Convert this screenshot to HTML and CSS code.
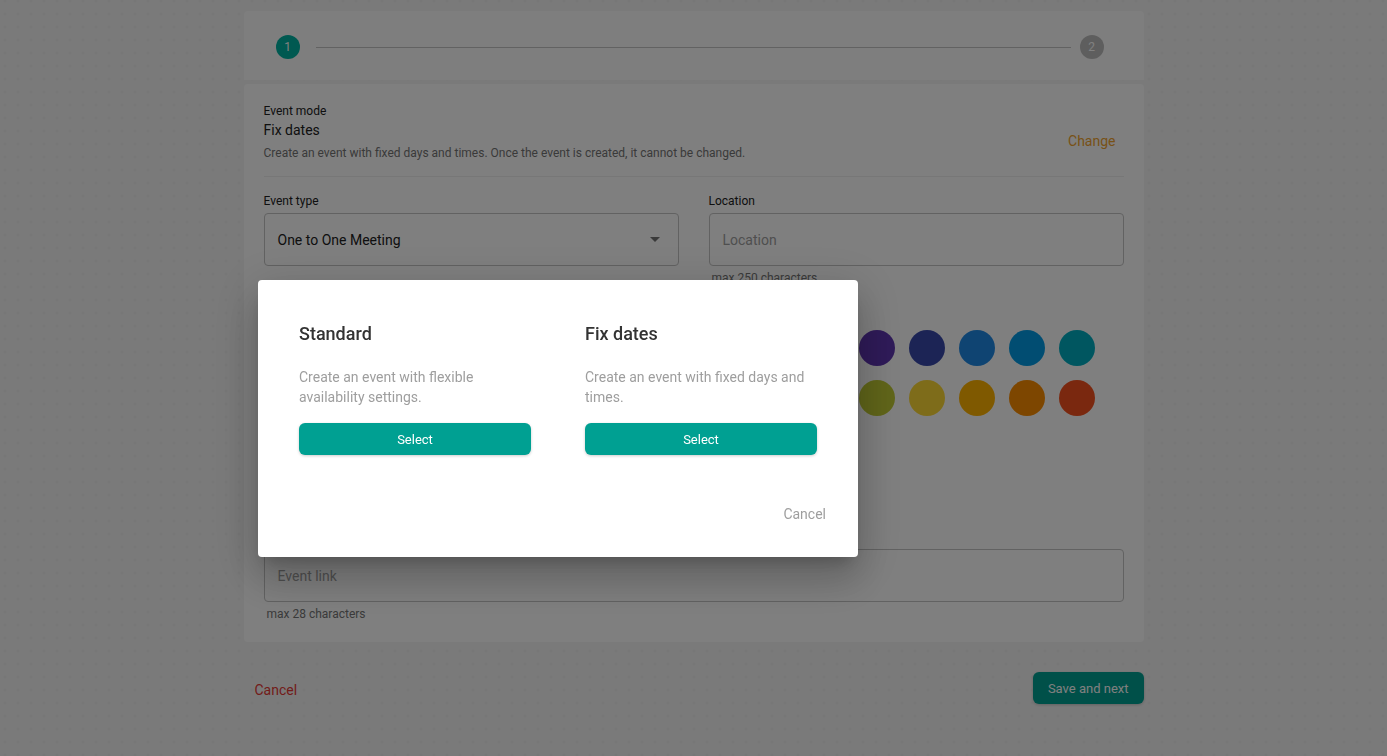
FILE: index.html
```html
<!DOCTYPE html>
<html lang="en">
<head>
<meta charset="utf-8">
<title>New event</title>
<link rel="stylesheet" href="styles.css">
</head>
<body>
<div class="page">
  <div class="stepper">
    <span class="step step-active">1</span>
    <span class="step-line"></span>
    <span class="step">2</span>
  </div>

  <div class="card">
    <div class="mode">
      <div class="mode-info">
        <div class="label">Event mode</div>
        <div class="mode-value">Fix dates</div>
        <div class="mode-desc">Create an event with fixed days and times. Once the event is created, it cannot be changed.</div>
      </div>
      <button class="link-btn change-btn">Change</button>
    </div>
    <div class="divider"></div>

    <div class="grid">
      <div class="field">
        <div class="label">Event type</div>
        <div class="box select-box">
          <span class="value">One to One Meeting</span>
          <span class="caret"></span>
        </div>
      </div>
      <div class="field">
        <div class="label">Location</div>
        <div class="box"><span class="placeholder">Location</span></div>
        <div class="hint">max 250 characters</div>
      </div>

      <div class="field"></div>
      <div class="field">
        <div class="label">Color</div>
        <div class="swatches">
          <span class="swatch" style="background:#e53935"></span>
          <span class="swatch" style="background:#d81b60"></span>
          <span class="swatch" style="background:#8e24aa"></span>
          <span class="swatch" style="background:#5e35b1"></span>
          <span class="swatch" style="background:#3949ab"></span>
          <span class="swatch" style="background:#1e88e5"></span>
          <span class="swatch" style="background:#039be5"></span>
          <span class="swatch" style="background:#00acc1"></span>
          <span class="swatch" style="background:#00897b"></span>
          <span class="swatch" style="background:#43a047"></span>
          <span class="swatch" style="background:#7cb342"></span>
          <span class="swatch" style="background:#c0ca33"></span>
          <span class="swatch" style="background:#fdd835"></span>
          <span class="swatch" style="background:#ffb300"></span>
          <span class="swatch" style="background:#fb8c00"></span>
          <span class="swatch" style="background:#f4511e"></span>
        </div>
      </div>
    </div>

    <div class="field link-field">
      <div class="label">Event link</div>
      <div class="box"><span class="placeholder">Event link</span></div>
      <div class="hint">max 28 characters</div>
    </div>
  </div>

  <div class="actions">
    <button class="link-btn cancel-btn">Cancel</button>
    <button class="primary-btn save-btn">Save and next</button>
  </div>
</div>

<div class="backdrop"></div>

<div class="dialog">
  <div class="options">
    <div class="option">
      <h2 class="option-title">Standard</h2>
      <p class="option-desc">Create an event with flexible availability settings.</p>
      <button class="primary-btn select-btn">Select</button>
    </div>
    <div class="option">
      <h2 class="option-title">Fix dates</h2>
      <p class="option-desc">Create an event with fixed days and times.</p>
      <button class="primary-btn select-btn">Select</button>
    </div>
  </div>
  <div class="dialog-actions">
    <button class="link-btn dialog-cancel">Cancel</button>
  </div>
</div>
</body>
</html>
```

FILE: styles.css
```css
* {
  box-sizing: border-box;
}

html, body {
  margin: 0;
  height: 100%;
}

body {
  font-family: Roboto, "Liberation Sans", Arial, sans-serif;
  color: #212121;
  background-color: #f5f5f5;
  background-image: radial-gradient(circle, #eaeaea 0.8px, transparent 1.4px);
  background-size: 13px 13px;
  background-position: -1.5px 7.5px;
  overflow: hidden;
}

button {
  font-family: inherit;
  border: 0;
  background: none;
  cursor: pointer;
  padding: 0;
}

.page {
  width: 900px;
  margin: 0 auto;
  padding-top: 11px;
}

/* Stepper */
.stepper {
  height: 69px;
  background: #fcfcfc;
  display: flex;
  align-items: flex-start;
  padding: 24px 40px 0 32px;
  border-radius: 4px 4px 0 0;
}

.step {
  width: 24px;
  height: 24px;
  border-radius: 50%;
  background: #bdbdbd;
  color: #fff;
  font-size: 12px;
  display: flex;
  align-items: center;
  justify-content: center;
  flex: none;
}

.step-active {
  background: #00b3a2;
}

.step-line {
  flex: 1;
  height: 1px;
  background: #c4c4c4;
  margin: 12px 9px 0 16px;
}

/* Form card */
.card {
  margin-top: 4px;
  background: #fff;
  border-radius: 4px;
  padding: 19px 20px 20px;
}

.mode {
  display: flex;
  justify-content: space-between;
  align-items: flex-start;
}

.label {
  font-size: 12px;
  line-height: 16px;
  color: #212121;
}

.mode-value {
  font-size: 14px;
  line-height: 20px;
  margin-top: 1px;
}

.mode-desc {
  font-size: 12px;
  line-height: 16px;
  color: #757575;
  margin-top: 5px;
}

.link-btn {
  font-size: 14px;
  line-height: 20px;
}

.change-btn {
  color: #f0a32e;
  margin-top: 28px;
  margin-right: 8px;
}

.divider {
  height: 1px;
  background: #eeeeee;
  margin-top: 15px;
}

.grid {
  display: grid;
  grid-template-columns: 1fr 1fr;
  column-gap: 30px;
  margin-top: 16px;
}

.field .label {
  margin-bottom: 4px;
}

.box {
  height: 53px;
  border: 1px solid #c4c4c4;
  border-radius: 4px;
  display: flex;
  align-items: center;
  padding: 0 13px;
  font-size: 14px;
}

.select-box {
  justify-content: space-between;
}

.value {
  color: #212121;
}

.placeholder {
  color: #9e9e9e;
}

.caret {
  width: 0;
  height: 0;
  border-left: 5px solid transparent;
  border-right: 5px solid transparent;
  border-top: 5px solid #757575;
  margin-right: 5px;
}

.hint {
  font-size: 12px;
  line-height: 16px;
  color: #757575;
  margin-top: 4px;
  padding-left: 3px;
}

.grid .field:nth-child(3),
.grid .field:nth-child(4) {
  margin-top: 12px;
}

.swatches {
  display: grid;
  grid-template-columns: repeat(8, 36px);
  gap: 14px;
  margin-top: 16px;
}

.swatch {
  width: 36px;
  height: 36px;
  border-radius: 50%;
}

.link-field {
  margin-top: 113px;
}

/* Bottom actions */
.actions {
  display: flex;
  justify-content: space-between;
  align-items: center;
  margin-top: 30px;
}

.cancel-btn {
  color: #e53935;
  padding: 0 11px;
  margin-top: 4px;
}

.primary-btn {
  background: #00a092;
  color: #fff;
  border-radius: 6px;
  font-size: 13px;
  box-shadow: 0 1px 3px rgba(0, 0, 0, 0.2);
}

.save-btn {
  height: 32px;
  padding: 0 15px;
}

/* Modal */
.backdrop {
  position: fixed;
  inset: 0;
  background: rgba(0, 0, 0, 0.5);
}

.dialog {
  position: fixed;
  left: 258px;
  top: 280px;
  width: 600px;
  height: 277px;
  background: #fff;
  border-radius: 4px;
  padding: 40px 32px 33px 41px;
  box-shadow: 0 11px 15px -7px rgba(0, 0, 0, 0.2),
              0 24px 38px 3px rgba(0, 0, 0, 0.14),
              0 9px 46px 8px rgba(0, 0, 0, 0.12);
}

.options {
  display: grid;
  grid-template-columns: 232px 232px;
  column-gap: 54px;
}

.option-title {
  margin: 0;
  font-size: 18px;
  line-height: 28px;
  font-weight: 500;
  color: #333;
}

.option-desc {
  margin: 19px 0 16px;
  font-size: 14px;
  line-height: 20px;
  color: #9e9e9e;
  min-height: 40px;
}

.select-btn {
  width: 232px;
  height: 32px;
}

.dialog-actions {
  display: flex;
  justify-content: flex-end;
  margin-top: 49px;
}

.dialog-cancel {
  color: #9e9e9e;
}
```
